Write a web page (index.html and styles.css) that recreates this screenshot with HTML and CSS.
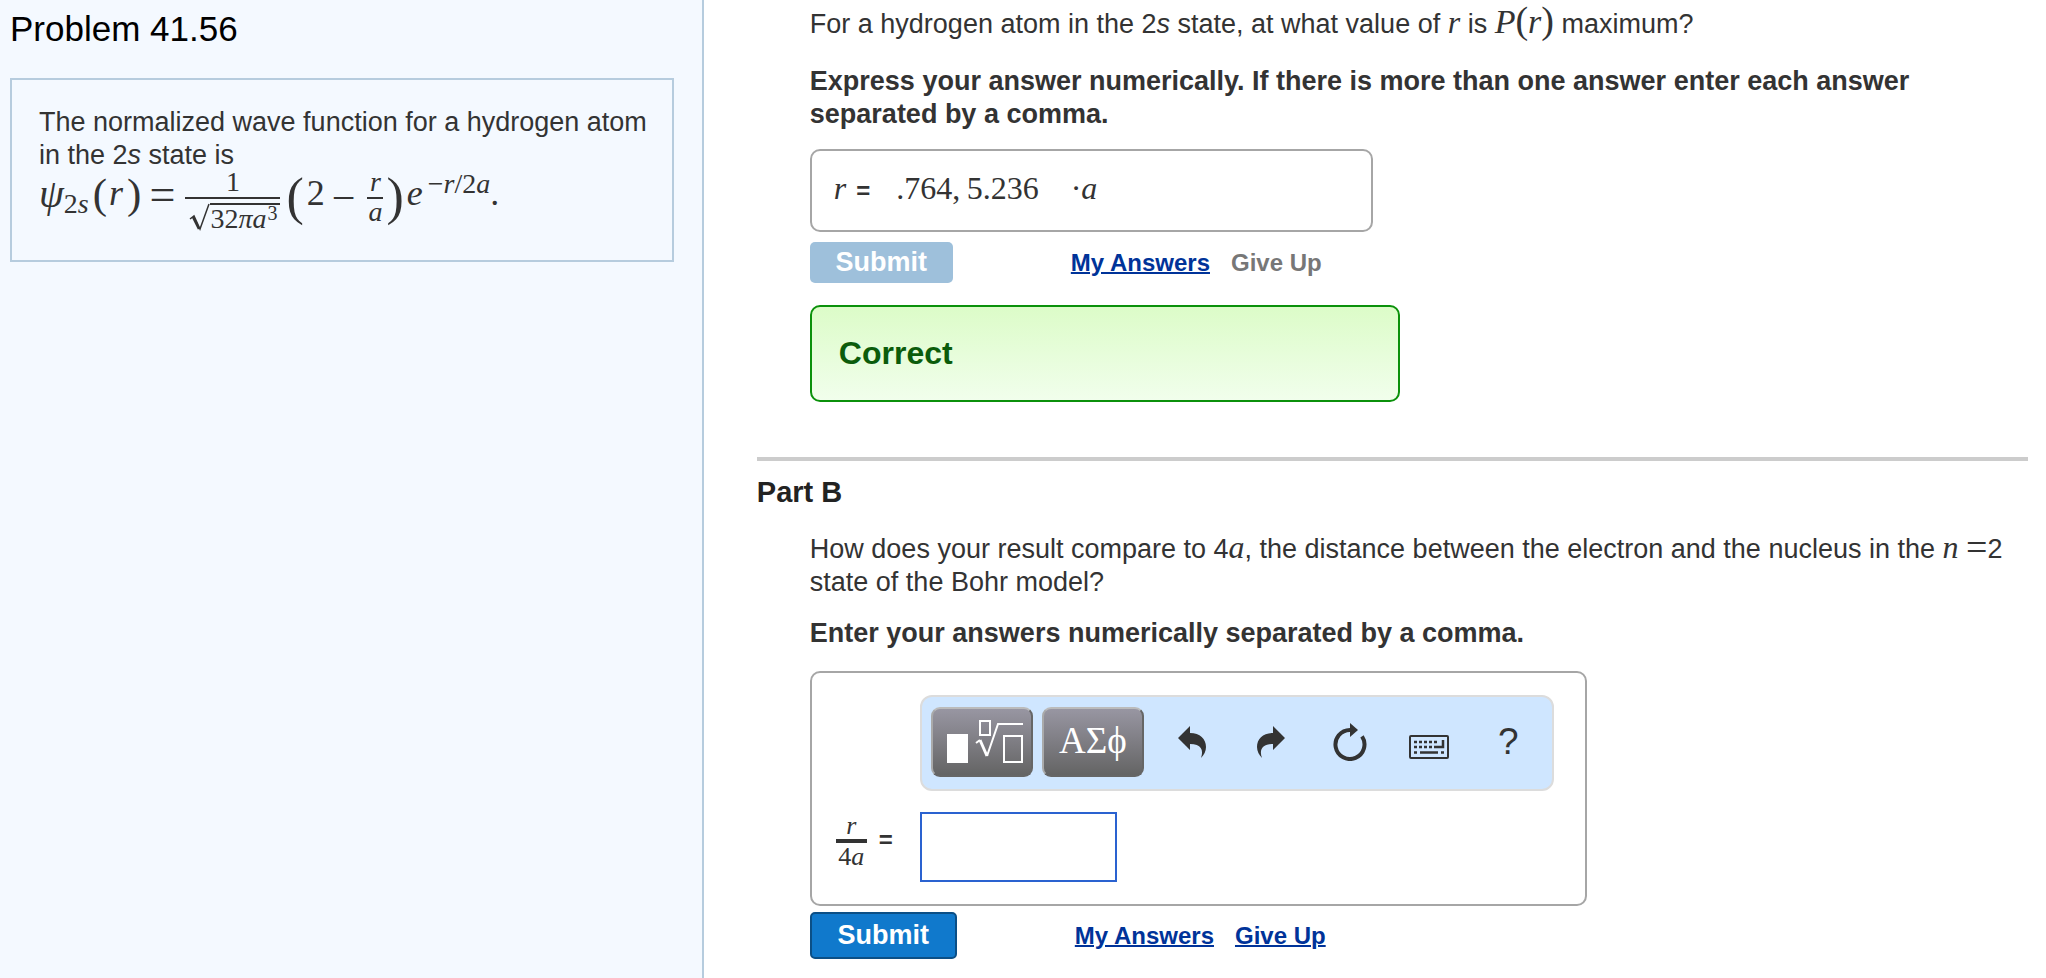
FILE: index.html
```html
<!DOCTYPE html>
<html lang="en">
<head>
    <meta charset="UTF-8">
    <meta name="viewport" content="width=device-width, initial-scale=1.0">
    <title>Problem 41.56</title>
    <link rel="stylesheet" href="styles.css">
</head>
<body>
    <aside class="sidebar">
        <h1>Problem 41.56</h1>
        <div class="intro">
            <p>The normalized wave function for a hydrogen atom in the 2<em>s</em> state is</p>
            <div class="formula">
                <span class="term psi"><i>ψ</i><sub>2<i>s</i></sub></span>
                <span class="paren">(</span><span class="term"><i>r</i></span><span class="paren">)</span>
                <span class="op">=</span>
                <span class="frac">
                    <span class="num">1</span>
                    <span class="den root">
                        <svg class="radical" viewBox="0 0 22 28" width="22" height="28">
                            <path d="M2 16l4-3 6 13L21 1" fill="none" stroke="#333" stroke-width="1.5"/>
                            <path d="M5 14l6 12" stroke="#333" stroke-width="2.5"/>
                        </svg>
                        <span class="radicand">32<i>πa</i><sup>3</sup></span>
                    </span>
                </span>
                <span class="paren big open">(</span><span class="term">2</span>
                <span class="op minus">−</span>
                <span class="frac small">
                    <span class="num"><i>r</i></span>
                    <span class="den"><i>a</i></span>
                </span>
                <span class="paren big">)</span>
                <span class="term"><i>e</i><sup>−<i>r</i>/2<i>a</i></sup></span>
                <span class="term stop">.</span>
            </div>
        </div>
    </aside>

    <main>
        <section class="part">
            <p>For a hydrogen atom in the 2<em>s</em> state, at what value of <i class="math">r</i> is <span class="math pr"><i>P</i><span class="thin">(</span><i>r</i><span class="thin">)</span></span> maximum?</p>
            <p class="instructions">Express your answer numerically. If there is more than one answer enter each answer separated by a comma.</p>
            <div class="answer done">
                <i class="math">r</i><span class="eq">=</span>
                <span class="math value">.764,&thinsp;5.236</span>
                <span class="math">·<i>a</i></span>
            </div>
            <div class="actions">
                <button class="submit" disabled>Submit</button>
                <a href="#answers">My Answers</a>
                <span class="disabled">Give Up</span>
            </div>
            <div class="feedback">Correct</div>
        </section>

        <hr>

        <h2>Part B</h2>
        <section class="part part-b">
            <p>How does your result compare to 4<i class="math">a</i>, the distance between the electron and the nucleus in the <i class="math">n</i> <span class="math wide">=</span>2 state of the Bohr model?</p>
            <p class="instructions">Enter your answers numerically separated by a comma.</p>
            <div class="answer editor">
                <div class="toolbar">
                    <button class="key" aria-label="Templates">
                        <svg viewBox="0 0 98 65" width="98" height="65" fill="none" stroke="#fff" stroke-width="2">
                            <path d="M14 24h21v29h-21z" fill="#fff" stroke="none"/>
                            <path d="M47 11h10v14h-10z"/>
                            <path d="M43 33l4-3M54 46L65 14h25"/>
                            <path d="M47 30l7 16" stroke-width="3"/>
                            <path d="M71 26h18v26h-18z"/>
                        </svg>
                    </button>
                    <button class="key symbols" aria-label="Symbols">ΑΣϕ</button>
                    <button class="tool" aria-label="Undo">
                        <svg viewBox="0 0 28 32" width="28" height="32" fill="#333">
                            <path d="M0 12L12 0v7c10 0 16 6 16 14 0 4-2 8-5 11 3-8 0-14-11-14v6z"/>
                        </svg>
                    </button>
                    <button class="tool" aria-label="Redo">
                        <svg viewBox="0 0 28 32" width="28" height="32" fill="#333">
                            <path d="M28 12L16 0v7C6 7 0 13 0 21c0 4 2 8 5 11-3-8 0-14 11-14v6z"/>
                        </svg>
                    </button>
                    <button class="tool" aria-label="Reset">
                        <svg viewBox="0 0 34 38" width="34" height="38">
                            <path d="M17 7a14.500 14.500 0 1 0 12 6.400" fill="none" stroke="#333" stroke-width="4"/>
                            <path d="M17 0l8 7-8 7z" fill="#333"/>
                        </svg>
                    </button>
                    <button class="tool keyboard" aria-label="Keyboard">
                        <svg viewBox="0 0 40 24" width="40" height="24" fill="none" stroke="#333">
                            <rect x="1" y="1" width="38" height="22" rx="1" stroke-width="2"/>
                            <path d="M5 7h25M5 12h25" stroke-width="2.5" stroke-dasharray="3 2"/>
                            <path d="M5 17.500h3M11 17.500h18M32 17.500h3M28 12h6V5" stroke-width="2.500"/>
                        </svg>
                    </button>
                    <button class="tool help" aria-label="Help">?</button>
                </div>
                <label for="ratio" class="ratio">
                    <span class="frac thick">
                        <span class="num"><i>r</i></span>
                        <span class="den">4<i>a</i></span>
                    </span>
                    <span class="eq">=</span>
                </label>
                <input type="text" id="ratio">
            </div>
            <div class="actions active">
                <button class="submit">Submit</button>
                <a href="#answers">My Answers</a>
                <a href="#giveup">Give Up</a>
            </div>
        </section>
    </main>
</body>
</html>
```
FILE: styles.css
```css
* {
    box-sizing: border-box;
}
body {
    margin: 0;
    display: flex;
    min-height: 100vh;
    font-family: "Liberation Sans", Arial, sans-serif;
    font-size: 27px;
    line-height: 33px;
    color: #333;
    background: #fff;
}
p, h1, h2 {
    margin: 0;
}
button {
    font-family: inherit;
    padding: 0;
    cursor: pointer;
}
svg {
    display: block;
}

/* left column */
.sidebar {
    width: 34.4%;
    flex-shrink: 0;
    padding: 9px 28px 0 10px;
    background: #f4f9ff;
    border-right: 2px solid #b6ccde;
}
h1 {
    font-size: 35px;
    line-height: 40px;
    font-weight: normal;
    color: #000;
}
.intro {
    margin-top: 29px;
    padding: 26px 16px 32px 27px;
    border: 2px solid #b6ccde;
}

/* formulas */
.math, .formula, .ratio .frac {
    font-family: "Liberation Serif", "Times New Roman", serif;
}
.math {
    font-size: 32px;
    line-height: 0;
}
.formula {
    display: flex;
    align-items: center;
    height: 56px;
    font-size: 36px;
}
.term, .op {
    margin-bottom: 14px;
    white-space: nowrap;
}
.psi {
    font-size: 40px;
}
.formula sub, .formula sup {
    font-size: 28px;
    line-height: 0;
}
.formula sub {
    vertical-align: -6px;
}
.formula sup {
    margin-left: 5px;
    vertical-align: 12px;
}
.paren {
    margin: 0 2px 14px 4px;
    font-size: 43px;
}
.paren.big {
    margin: 0 3px 8px;
    font-size: 52px;
}
.paren.open {
    margin-left: 6px;
}
.op {
    font-size: 46px;
    margin: 0 10px 12px 6px;
}
.op.minus {
    font-size: 42px;
    margin: 0 12px 4px 7px;
}
.frac {
    display: flex;
    flex-direction: column;
    align-items: center;
    font-size: 28px;
}
.num {
    height: 28px;
    line-height: 26px;
}
.den {
    align-self: stretch;
    height: 34px;
    padding-top: 2px;
    line-height: 32px;
    text-align: center;
    border-top: 2px solid #333;
}
.root {
    display: flex;
    padding: 4px 0 0 3px;
}
.radicand {
    height: 28px;
    padding-right: 3px;
    line-height: 28px;
    border-top: 2px solid #333;
}
.formula .radicand sup {
    margin-left: 1px;
    font-size: 20px;
    vertical-align: 8px;
}
.small .den {
    line-height: 22px;
}
.small .num, .small .den {
    min-width: 16px;
    text-align: center;
}

/* right column */
main {
    flex: 1;
    padding: 8px 18px 0 53px;
}
.part {
    padding-left: 53px;
}
.pr {
    font-size: 34px;
}
.thin {
    font-size: 38px;
}
.instructions {
    margin-top: 24px;
    padding-right: 80px;
    font-weight: bold;
}
.answer {
    margin-top: 18px;
    border: 2px solid #a6a6a6;
    border-radius: 10px;
}
.part-b .answer {
    margin-top: 21px;
}
.part-b .instructions {
    margin-top: 18px;
}
.eq {
    font-size: 24px;
    font-weight: bold;
}
.done {
    display: flex;
    align-items: baseline;
    max-width: 563px;
    height: 83px;
    padding: 23px 22px;
}
.done .eq {
    margin-left: 10px;
}
.done .value {
    margin: 0 32px 0 26px;
}
.actions {
    display: flex;
    align-items: center;
    margin-top: 10px;
    font-size: 24px;
    font-weight: bold;
}
.submit {
    width: 143px;
    height: 41px;
    margin-right: 118px;
    font-size: 27px;
    line-height: 33px;
    font-weight: bold;
    color: #fff;
    background: #9ec0db;
    border: 0;
    border-radius: 5px;
}
.actions a {
    margin-right: 21px;
    color: #039;
    text-decoration-thickness: 2px;
}
.disabled {
    color: #777;
}
.feedback {
    max-width: 590px;
    margin-top: 22px;
    padding: 29px 27px 30px;
    font-size: 32px;
    line-height: 34px;
    font-weight: bold;
    color: #0b5c0b;
    background: linear-gradient(#dcfcc8, #f1feec);
    border: 2px solid #0b910b;
    border-radius: 10px;
}
hr {
    height: 4px;
    margin: 55px 0 0;
    border: 0;
    background: #ccc;
}
h2 {
    margin: 13px 0 23px;
    font-size: 29px;
    line-height: 36px;
    color: #222;
}
.wide {
    font-size: 38px;
    vertical-align: -2px;
}

/* equation editor */
.editor {
    display: grid;
    grid-template-columns: 85px 1fr;
    column-gap: 23px;
    row-gap: 21px;
    max-width: 777px;
    padding: 22px 31px 22px 0;
}
.toolbar {
    grid-column: 2;
    display: flex;
    align-items: center;
    height: 96px;
    padding: 0 4px 2px 9px;
    background: #cfe6ff;
    border: 2px solid #dcdcdc;
    border-radius: 12px;
}
.key {
    width: 102px;
    height: 70px;
    margin-right: 9px;
    color: #fff;
    background: linear-gradient(#9896a2, #646464);
    border: 2px solid;
    border-color: #bbb #666 #666 #aaa;
    border-radius: 9px;
}
.symbols {
    padding-bottom: 4px;
    font-family: "Liberation Serif", "Times New Roman", serif;
    font-size: 37px;
}
.tool {
    display: flex;
    flex: 1;
    align-items: center;
    justify-content: center;
    height: 70px;
    color: #333;
    background: none;
    border: 0;
}
.keyboard {
    padding-top: 10px;
}
.help {
    font-size: 37px;
}
.ratio {
    display: flex;
    align-items: center;
    justify-content: space-between;
    padding: 0 4px 12px 24px;
}
.ratio .frac {
    font-size: 26px;
}
.ratio .num {
    height: 26px;
}
.ratio .den {
    width: 31px;
    height: 30px;
    padding-top: 0;
    line-height: 28px;
    border-top-width: 4px;
}
.ratio .eq {
    margin-bottom: 4px;
}
#ratio {
    width: 197px;
    height: 70px;
    padding: 0 10px;
    font-size: 27px;
    border: 2px solid #2a62d0;
}
.active {
    margin-top: 6px;
}
.active .submit {
    width: 147px;
    height: 47px;
    background: #1079cc;
    border: 2px solid #0b4f86;
}
```
